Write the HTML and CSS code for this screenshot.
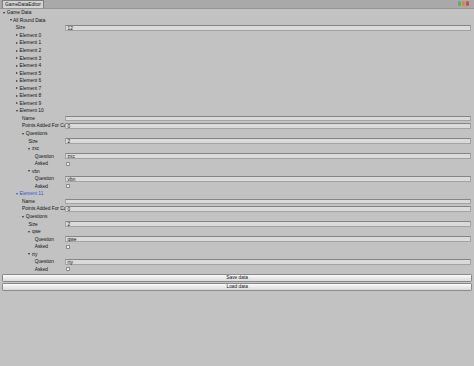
FILE: index.html
```html
<!DOCTYPE html>
<html>
<head>
<meta charset="utf-8">
<link rel="stylesheet" href="styles.css">
</head>
<body>
<div class="window">
  <div class="tabbar">
    <div class="tab">GameDataEditor</div>
    <div class="status">
      <span class="dot g"></span><span class="dot o"></span><span class="dot r"></span>
    </div>
  </div>
  <div class="panel">
    <div class="row"><span class="fold open d0"><i></i>Game Data</span></div>
    <div class="row"><span class="fold open d1"><i></i>All Round Data</span></div>
    <div class="row"><span class="lbl d2">Size</span><span class="field">12</span></div>
    <div class="row"><span class="fold d2"><i></i>Element 0</span></div>
    <div class="row"><span class="fold d2"><i></i>Element 1</span></div>
    <div class="row"><span class="fold d2"><i></i>Element 2</span></div>
    <div class="row"><span class="fold d2"><i></i>Element 3</span></div>
    <div class="row"><span class="fold d2"><i></i>Element 4</span></div>
    <div class="row"><span class="fold d2"><i></i>Element 5</span></div>
    <div class="row"><span class="fold d2"><i></i>Element 6</span></div>
    <div class="row"><span class="fold d2"><i></i>Element 7</span></div>
    <div class="row"><span class="fold d2"><i></i>Element 8</span></div>
    <div class="row"><span class="fold d2"><i></i>Element 9</span></div>
    <div class="row"><span class="fold open d2"><i></i>Element 10</span></div>
    <div class="row"><span class="lbl d3">Name</span><span class="field"></span></div>
    <div class="row"><span class="lbl d3">Points Added For Correct Answer</span><span class="field">0</span></div>
    <div class="row"><span class="fold open d3"><i></i>Questions</span></div>
    <div class="row"><span class="lbl d4">Size</span><span class="field">2</span></div>
    <div class="row"><span class="fold open d4"><i></i>zxc</span></div>
    <div class="row"><span class="lbl d5">Question</span><span class="field">zxc</span></div>
    <div class="row"><span class="lbl d5">Asked</span><span class="check"></span></div>
    <div class="row"><span class="fold open d4"><i></i>vbn</span></div>
    <div class="row"><span class="lbl d5">Question</span><span class="field">vbn</span></div>
    <div class="row"><span class="lbl d5">Asked</span><span class="check"></span></div>
    <div class="row"><span class="fold open d2 sel"><i></i>Element 11</span></div>
    <div class="row"><span class="lbl d3">Name</span><span class="field"></span></div>
    <div class="row"><span class="lbl d3">Points Added For Correct Answer</span><span class="field">0</span></div>
    <div class="row"><span class="fold open d3"><i></i>Questions</span></div>
    <div class="row"><span class="lbl d4">Size</span><span class="field">2</span></div>
    <div class="row"><span class="fold open d4"><i></i>qwe</span></div>
    <div class="row"><span class="lbl d5">Question</span><span class="field">qwe</span></div>
    <div class="row"><span class="lbl d5">Asked</span><span class="check"></span></div>
    <div class="row"><span class="fold open d4"><i></i>rty</span></div>
    <div class="row"><span class="lbl d5">Question</span><span class="field">rty</span></div>
    <div class="row"><span class="lbl d5">Asked</span><span class="check"></span></div>
    <div class="buttons">
      <button class="btn">Save data</button>
      <button class="btn">Load data</button>
    </div>
  </div>
</div>
</body>
</html>
```

FILE: styles.css
```css
html, body {
  margin: 0;
  padding: 0;
  width: 474px;
  height: 366px;
  overflow: hidden;
  background: #c2c2c2;
}

.window {
  width: 474px;
  height: 366px;
  display: flex;
  flex-direction: column;
  font-family: "Liberation Sans", Arial, sans-serif;
  font-size: 4.8px;
  color: #111;
}

.tabbar {
  height: 9px;
  flex: none;
  display: flex;
  align-items: flex-end;
  justify-content: space-between;
  background: #a9a9a9;
  border-bottom: 1px solid #929292;
  box-sizing: border-box;
  padding-left: 1.5px;
}

.tab {
  height: 7.5px;
  line-height: 7px;
  padding: 0 2.5px;
  background: #d4d4d4;
  border: 0.5px solid #7d7d7d;
  border-bottom: none;
  border-radius: 1px 1px 0 0;
  color: #111;
}

.status {
  display: flex;
  align-self: flex-start;
  gap: 0.5px;
  padding: 0.5px 5px 0 0;
}

.dot {
  width: 3.5px;
  height: 5px;
  border-radius: 1.5px;
}
.dot.g { background: #5fae5a; }
.dot.o { background: #d9883a; }
.dot.r { background: #cf4b4b; }

.panel {
  flex: 1;
  display: flex;
  flex-direction: column;
}

.row {
  height: 7.56px;
  flex: none;
  display: flex;
  align-items: center;
  white-space: nowrap;
}

.lbl, .fold {
  --d: 0;
  display: flex;
  align-items: center;
  box-sizing: border-box;
  width: 65px;
  flex: none;
  overflow: hidden;
}

.d0 { --d: 0; }
.d1 { --d: 1; }
.d2 { --d: 2; }
.d3 { --d: 3; }
.d4 { --d: 4; }
.d5 { --d: 5; }

.lbl {
  padding-left: calc(3.2px + var(--d) * 6.3px);
}

.fold {
  padding-left: calc(3.2px + var(--d) * 6.3px);
}

.fold i {
  flex: none;
  width: 0;
  height: 0;
  margin-right: 1.8px;
  border-top: 1.4px solid transparent;
  border-bottom: 1.4px solid transparent;
  border-left: 2.6px solid #333;
}

.fold.open i {
  margin-right: 1.6px;
  border-left: 1.5px solid transparent;
  border-right: 1.5px solid transparent;
  border-top: 2.6px solid #333;
  border-bottom: none;
}

.fold.sel { color: #2f56d0; }
.fold.sel.open i { border-top-color: #2f56d0; }

.field {
  flex: 1;
  margin-right: 3.5px;
  height: 5.4px;
  line-height: 5px;
  box-sizing: border-box;
  padding-left: 1.6px;
  background: #dadada;
  border: 0.5px solid #a3a3a3;
  border-top-color: #858585;
  border-radius: 0.5px;
  color: #111;
}

.check {
  margin-left: 1px;
  width: 4px;
  height: 4px;
  box-sizing: border-box;
  background: #ececec;
  border: 0.5px solid #8a8a8a;
  border-radius: 0.7px;
}

.buttons {
  display: flex;
  flex-direction: column;
  gap: 1.5px;
  padding: 1px 2px 0 2.3px;
}

.btn {
  height: 7.5px;
  margin: 0;
  padding: 0;
  font-family: inherit;
  font-size: 4.8px;
  line-height: 6.5px;
  color: #111;
  background: linear-gradient(#fbfbfb, #d9d9d9);
  border: 0.5px solid #8a8a8a;
  border-radius: 1.2px;
}
```
